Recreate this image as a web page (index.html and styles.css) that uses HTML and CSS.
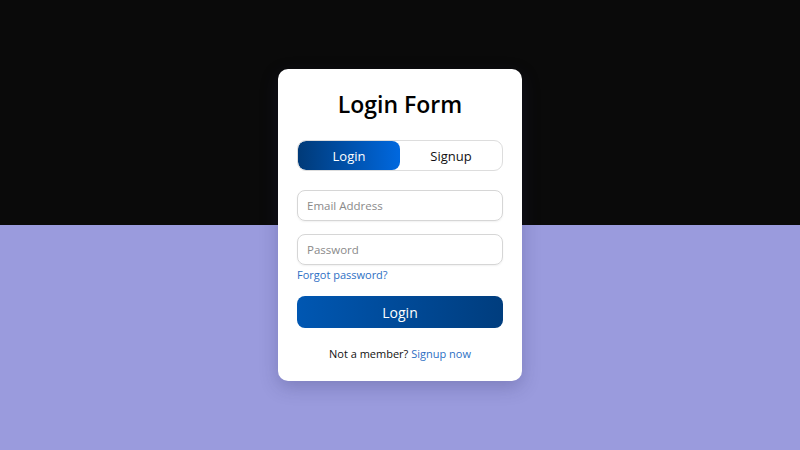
FILE: index.html
```html
<!DOCTYPE html>
<html>
<head>
<meta charset="utf-8">
<link rel="stylesheet" href="styles.css">
</head>
<body>
<div class="bg">
  <div class="bg-top"></div>
  <div class="bg-bottom"></div>
</div>
<main class="stage">
  <div class="card">
    <h1 class="title">Login Form</h1>
    <div class="tabs">
      <div class="tab active">Login</div>
      <div class="tab">Signup</div>
    </div>
    <div class="field">Email Address</div>
    <div class="field">Password</div>
    <a class="forgot">Forgot password?</a>
    <button class="submit">Login</button>
    <p class="footer">Not a member? <a class="link">Signup now</a></p>
  </div>
</main>
</body>
</html>
```
FILE: styles.css
```css
* { box-sizing: border-box; }
html, body { margin: 0; padding: 0; width: 800px; height: 450px; overflow: hidden; }
body { font-family: "Open Sans", "DejaVu Sans", sans-serif; position: relative; }
.bg { position: absolute; inset: 0; display: flex; flex-direction: column; }
.bg-top { height: 225px; background: #0a0a0a; }
.bg-bottom { flex: 1; background: #9a9bdd; }
.stage { position: relative; height: 450px; display: flex; justify-content: center; align-items: flex-start; padding-top: 69px; }
.card {
  width: 244px; background: #fff; border-radius: 10px;
  padding: 19px 19px 20px;
  display: flex; flex-direction: column;
  box-shadow: 0 6px 18px rgba(40,40,90,0.25);
}
.title { margin: 0; text-align: center; font-size: 23px; font-weight: 600; color: #000; line-height: 32px; }
.tabs { margin-top: 20px; height: 31px; border: 1px solid #ddd; border-radius: 9px; display: flex; overflow: hidden; }
.tab { flex: 1; display: flex; align-items: center; justify-content: center; font-size: 13px; font-weight: 500; color: #111; }
.tab.active { background: linear-gradient(90deg, #003a78, #0068df); color: #fff; border-radius: 8px; }
.field {
  margin-top: 19px; height: 31px; border: 1px solid #d6d6d6; border-radius: 8px;
  padding: 0 9px; display: flex; align-items: center; font-size: 11.5px; color: #8a8a8a;
  box-shadow: 0 1px 2px rgba(0,0,0,0.06);
}
.field + .field { margin-top: 13px; }
.forgot { margin-top: 2px; font-size: 11px; color: #2d6fc4; line-height: 15px; }
.submit {
  margin-top: 14px; height: 32px; border: 0; border-radius: 8px;
  background: linear-gradient(90deg, #0057b2, #003d7e); color: #fff;
  font-family: inherit; font-size: 14px; font-weight: 500;
}
.footer { margin: 18px 0 0; text-align: center; font-size: 11px; color: #111; line-height: 15px; }
.link { color: #2d6fc4; }
```
